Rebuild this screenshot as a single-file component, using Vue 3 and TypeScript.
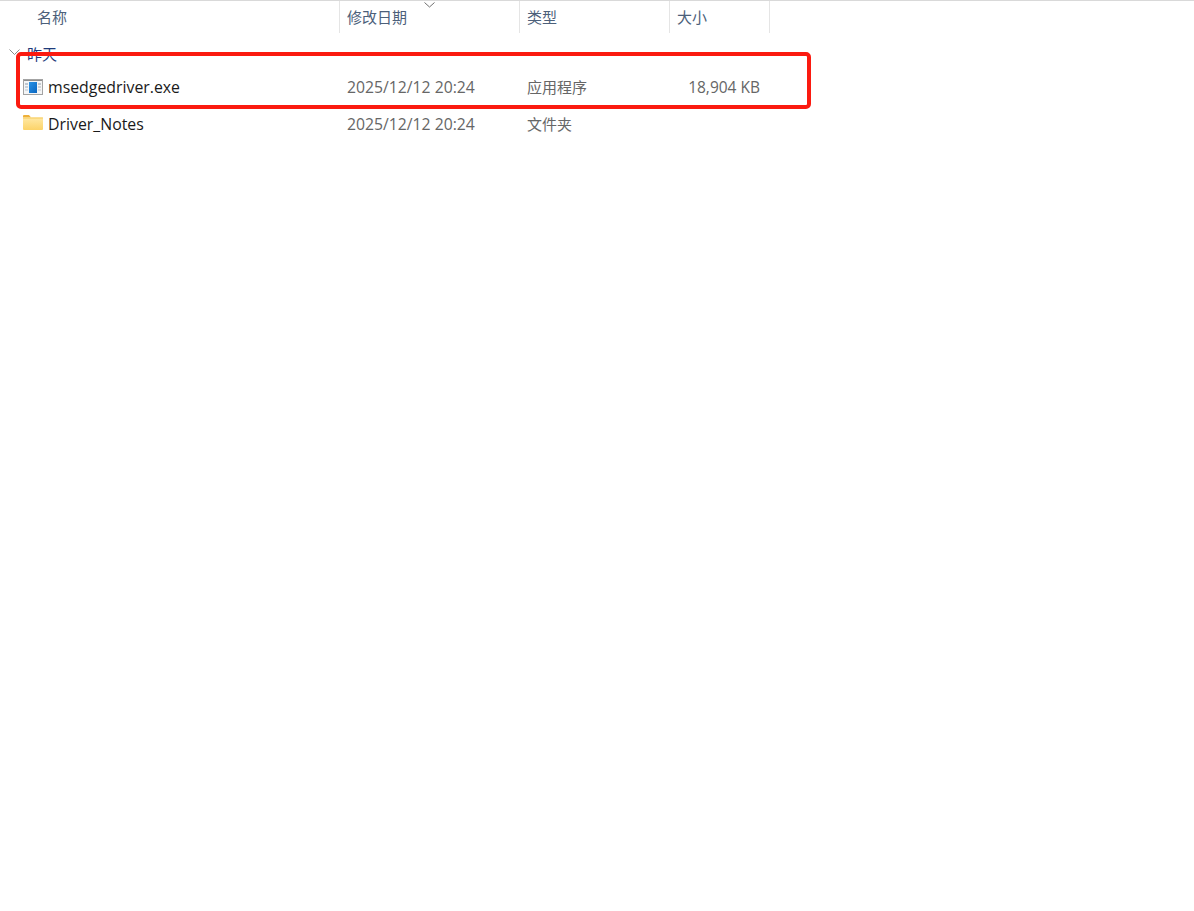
<script setup lang="ts">
interface Row { name: string; date: string; type: string; size: string; kind: 'exe' | 'folder' }
const rows: Row[] = [
  { name: 'msedgedriver.exe', date: '2025/12/12 20:24', type: '应用程序', size: '18,904 KB', kind: 'exe' },
  { name: 'Driver_Notes', date: '2025/12/12 20:24', type: '文件夹', size: '', kind: 'folder' },
]
</script>

<template>
  <div class="explorer">
    <div class="head">
      <div class="hcell hname">名称</div>
      <div class="hcell hdate">
        修改日期
        <svg class="sort" width="11" height="6" viewBox="0 0 11 6"><path d="M0.5 0.5 5.5 5 10.5 0.5" fill="none" stroke="#6f6f6f" stroke-width="1" /></svg>
      </div>
      <div class="hcell">类型</div>
      <div class="hcell">大小</div>
    </div>
    <div class="group">
      <svg class="chev" width="11" height="7" viewBox="0 0 11 7"><path d="M0.5 0.5 5.5 5.5 10.5 0.5" fill="none" stroke="#8a8a8a" stroke-width="1" /></svg>
      <span class="gtitle">昨天</span>
    </div>
    <div class="rows">
      <div v-for="r in rows" :key="r.name" class="row">
        <div class="cname">
          <svg v-if="r.kind === 'exe'" class="icon" width="20" height="16" viewBox="0 0 20 16">
            <defs>
              <linearGradient id="blue" x1="0" y1="0" x2="1" y2="1">
                <stop offset="0" stop-color="#2a93e6" />
                <stop offset="1" stop-color="#0b66c0" />
              </linearGradient>
            </defs>
            <rect x="0.5" y="0.5" width="19" height="15" fill="#f4f5f6" stroke="#a3a3a3" />
            <rect x="1" y="1" width="18" height="1" fill="#8f8f8f" />
            <rect x="6" y="3" width="8" height="11" fill="url(#blue)" />
            <rect x="2" y="4" width="3" height="2" fill="#bcc6d0" />
            <rect x="2" y="7" width="3" height="2" fill="#c8d1da" />
            <rect x="2" y="10" width="3" height="2" fill="#d6dde4" />
            <rect x="15" y="4" width="3" height="2" fill="#c4c9ce" />
            <rect x="15" y="7" width="3" height="2" fill="#d0d4d8" />
            <rect x="15" y="10" width="3" height="2" fill="#dcdfe2" />
          </svg>
          <svg v-else class="icon folder" width="20" height="16" viewBox="0 0 20 16">
            <defs>
              <linearGradient id="fold" x1="0" y1="0" x2="0" y2="1">
                <stop offset="0" stop-color="#ffe9a6" />
                <stop offset="1" stop-color="#fcd368" />
              </linearGradient>
            </defs>
            <path d="M0 1a1 1 0 0 1 1-1h5l2 2.5H0z" fill="#eeb03a" />
            <path d="M0 2.5h19a1 1 0 0 1 1 1V14a1 1 0 0 1-1 1H1a1 1 0 0 1-1-1z" fill="url(#fold)" />
            <rect x="0" y="2.5" width="20" height="1" fill="#f6c95c" />
          </svg>
          <span class="ntext">{{ r.name }}</span>
        </div>
        <div class="cell date">{{ r.date }}</div>
        <div class="cell ctype">{{ r.type }}</div>
        <div class="cell csize">{{ r.size }}</div>
      </div>
    </div>
    <div class="mark"></div>
  </div>
</template>

<style>
html, body { margin: 0; background: #fff; }
</style>

<style scoped>
.explorer {
  position: relative;
  width: 1194px;
  height: 911px;
  overflow: hidden;
  background: #fff;
  font-family: "Open Sans", "Noto Sans CJK SC", sans-serif;
  font-size: 15px;
}
.head {
  display: grid;
  grid-template-columns: 340px 180px 150px 100px;
  height: 33px;
  border-top: 1px solid #d9d9d9;
  box-sizing: border-box;
  color: #4c607a;
}
.hcell {
  position: relative;
  display: flex;
  align-items: center;
  padding: 0 0 2px 7px;
  height: 32px;
  border-right: 1px solid #e5e5e5;
  box-sizing: border-box;
}
.hname { padding-left: 37px; }
.sort { position: absolute; left: 84px; top: 1px; }
.group {
  display: flex;
  align-items: center;
  height: 20px;
  margin-top: 10px;
  padding-left: 9px;
  gap: 7px;
  color: #1e3a7a;
}
.chev { margin-bottom: 2px; }
.rows { display: flex; flex-direction: column; margin-top: 5px; }
.row {
  display: grid;
  grid-template-columns: 340px 180px 150px 100px;
  height: 37px;
  align-items: center;
  color: #666;
}
.cname { display: flex; align-items: center; padding-left: 23px; color: #1a1a1a; font-size: 15.85px; }
.icon { flex: none; margin-right: 5px; }
.folder { margin-bottom: 2px; }
.cell { padding-left: 7px; }
.date { font-size: 15.75px; }
.csize { text-align: right; padding: 0 10px 0 0; font-size: 15.5px; }
.mark {
  position: absolute;
  left: 16px;
  top: 52px;
  width: 795px;
  height: 57px;
  box-sizing: border-box;
  border: 4px solid #fb1a10;
  border-radius: 5px;
}
</style>
